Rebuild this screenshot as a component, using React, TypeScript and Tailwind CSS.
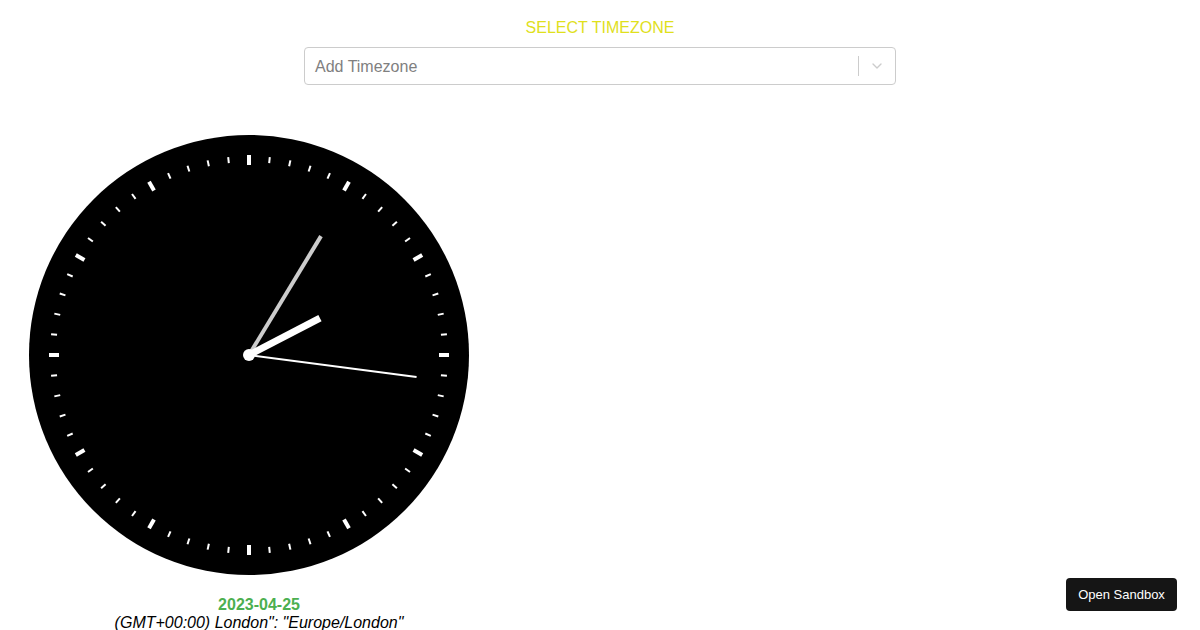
import { ChevronDown } from "lucide-react";

const CX = 220;
const CY = 220;

function hand(angleDeg: number, length: number) {
  const a = (angleDeg * Math.PI) / 180;
  return { x2: CX + Math.sin(a) * length, y2: CY - Math.cos(a) * length };
}

function Clock() {
  const ticks = Array.from({ length: 60 }, (_, i) => i);
  const hour = hand(62.5, 80);
  const minute = hand(31.2, 139);
  const second = hand(97.5, 169);

  return (
    <svg width="440" height="440" viewBox="0 0 440 440" className="block">
      <circle cx={CX} cy={CY} r="220" fill="#000" />
      {ticks.map((i) => {
        const major = i % 5 === 0;
        const inner = major ? 190 : 193;
        const outer = major ? 200 : 199;
        const a = (i * 6 * Math.PI) / 180;
        return (
          <line
            key={i}
            x1={CX + Math.sin(a) * inner}
            y1={CY - Math.cos(a) * inner}
            x2={CX + Math.sin(a) * outer}
            y2={CY - Math.cos(a) * outer}
            stroke="#fff"
            strokeWidth={major ? 4 : 2}
          />
        );
      })}
      <line x1={CX} y1={CY} {...minute} stroke="#cccccc" strokeWidth="4" />
      <line x1={CX} y1={CY} {...hour} stroke="#fff" strokeWidth="7" />
      <line x1={CX} y1={CY} {...second} stroke="#fff" strokeWidth="2" />
      <circle cx={CX} cy={CY} r="6" fill="#fff" />
    </svg>
  );
}

export default function App() {
  return (
    <div className="relative h-[630px] w-[1200px] overflow-hidden bg-white font-['Liberation_Sans',Arial,sans-serif]">
      <div className="flex flex-col items-center pt-[18px]">
        <h3 className="text-[16px] leading-[20px] text-[#e0e01c]">SELECT TIMEZONE</h3>
        <div className="mt-[9px] flex h-[38px] w-[592px] items-center rounded-[4px] border border-[#cccccc] bg-white">
          <span className="flex-1 pl-[10px] pt-px text-[16px] text-[#808080]">Add Timezone</span>
          <span className="h-[20px] w-px bg-[#cccccc]" />
          <span className="flex w-[36px] items-center justify-center text-[#cccccc]">
            <ChevronDown size={16} strokeWidth={2} />
          </span>
        </div>
      </div>

      <div className="ml-[29px] mt-[50px] flex w-[460px] flex-col items-center">
        <div className="self-start">
          <Clock />
        </div>
        <div className="mt-[21px] text-[16px] font-bold leading-[18px] text-[#4caf50]">2023-04-25</div>
        <div className="text-[16px] italic leading-[18px] text-black">
          (GMT+00:00) London": "Europe/London"
        </div>
      </div>

      <button className="absolute left-[1066px] top-[578px] h-[33px] w-[111px] rounded-[4px] bg-[#151515] text-[13px] text-white">
        Open Sandbox
      </button>
    </div>
  );
}
